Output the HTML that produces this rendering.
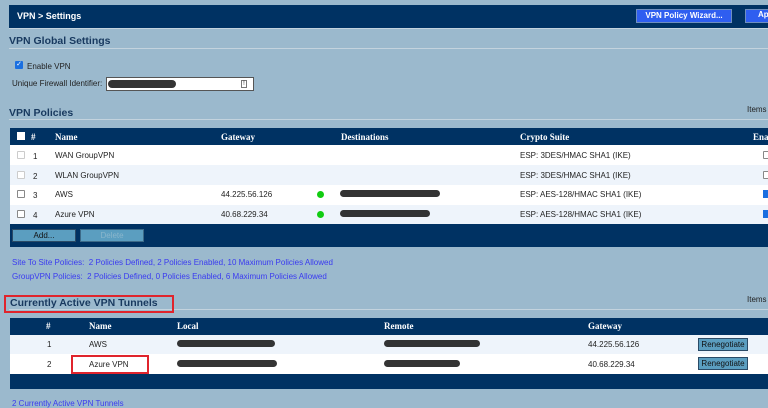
<!DOCTYPE html>
<html><head><meta charset="utf-8"><style>
*{margin:0;padding:0;box-sizing:border-box}
body{width:768px;height:407px;background:#9bb9cd;font-family:"Liberation Sans",sans-serif;font-size:8px;color:#222;position:relative;overflow:hidden}
.a{position:absolute;white-space:nowrap}
.dark{background:#003263}
.h{font-weight:bold;font-size:10.5px;color:#18395f}
.line{position:absolute;height:1px;background:#c3d3de}
.th{color:#fff;font-family:"Liberation Serif",serif;font-weight:bold;font-size:9px}
.cb{position:absolute;width:8px;height:8px;border:1px solid #888;background:#fff;border-radius:1px}
.blob{position:absolute;height:7px;background:#111;border-radius:4px;opacity:.85}
.lnk{color:#3a3af0}
.btn{position:absolute;background:#5b9ec0;border:1px solid #2a4a66;color:#111;font-size:8px;text-align:center}
</style></head><body>
<div class="a dark" style="left:9px;top:5px;width:759px;height:23px"></div>
<div class="a" style="left:17px;top:11px;color:#fff;font-weight:bold;font-size:9px">VPN &gt; Settings</div>
<div class="a" style="left:636px;top:9px;width:96px;height:14px;background:#2f5ef0;border:1px solid #6f8fbf;color:#fff;font-weight:bold;font-size:8px;text-align:center;line-height:12px">VPN Policy Wizard...</div>
<div class="a" style="left:745px;top:9px;width:30px;height:14px;background:#2f5ef0;border:1px solid #6f8fbf"></div>
<div class="a" style="left:758px;top:10px;color:#fff;font-weight:bold;font-size:8px">Ap</div>
<div class="line" style="left:9px;top:28px;width:759px"></div>
<div class="a h" style="left:9px;top:35px">VPN Global Settings</div>
<div class="line" style="left:9px;top:48px;width:759px"></div>
<div class="a" style="left:15px;top:61px;width:8px;height:8px;background:#1a6fe0;border-radius:1px;color:#fff;font-size:7px;line-height:8px;text-align:center">✓</div>
<div class="a" style="left:27px;top:62px">Enable VPN</div>
<div class="a" style="left:12px;top:79px">Unique Firewall Identifier:</div>
<div class="a" style="left:106px;top:77px;width:148px;height:14px;background:#fff;border:1px solid #555"></div>
<div class="blob" style="left:108px;top:80px;width:68px;height:8px"></div>
<div class="a" style="left:241px;top:80px;width:6px;height:8px;border:1px solid #777;font-size:6px;line-height:6px;text-align:center">!</div>
<div class="a h" style="left:9px;top:107px">VPN Policies</div>
<div class="a" style="left:747px;top:105px">Items</div>
<div class="line" style="left:9px;top:119px;width:759px"></div>
<div class="a dark" style="left:10px;top:128px;width:758px;height:17px"></div>
<div class="a" style="left:17px;top:132px;width:8px;height:8px;background:#fff"></div>
<div class="a th" style="left:31px;top:132px">#</div>
<div class="a th" style="left:55px;top:132px">Name</div>
<div class="a th" style="left:221px;top:132px">Gateway</div>
<div class="a th" style="left:341px;top:132px">Destinations</div>
<div class="a th" style="left:520px;top:132px">Crypto Suite</div>
<div class="a th" style="left:753px;top:132px">Ena</div>
<div class="a" style="left:10px;top:145px;width:758px;height:20px;background:#fff"></div>
<div class="a" style="left:10px;top:165px;width:758px;height:20px;background:#eef4fb"></div>
<div class="a" style="left:10px;top:185px;width:758px;height:20px;background:#fff"></div>
<div class="a" style="left:10px;top:205px;width:758px;height:19px;background:#eef4fb"></div>
<div class="cb" style="left:17px;top:151px;border-color:#ccc"></div><div class="a" style="left:33px;top:152px">1</div><div class="a" style="left:55px;top:151px">WAN GroupVPN</div><div class="a" style="left:520px;top:151px">ESP: 3DES/HMAC SHA1 (IKE)</div><div class="cb" style="left:763px;top:151px"></div>
<div class="cb" style="left:17px;top:171px;border-color:#ccc"></div><div class="a" style="left:33px;top:172px">2</div><div class="a" style="left:55px;top:171px">WLAN GroupVPN</div><div class="a" style="left:520px;top:171px">ESP: 3DES/HMAC SHA1 (IKE)</div><div class="cb" style="left:763px;top:171px"></div>
<div class="cb" style="left:17px;top:190px"></div><div class="a" style="left:33px;top:191px">3</div><div class="a" style="left:55px;top:190px">AWS</div><div class="a" style="left:221px;top:190px">44.225.56.126</div><div class="a" style="left:317px;top:191px;width:7px;height:7px;border-radius:50%;background:#1c1"></div><div class="blob" style="left:340px;top:190px;width:100px"></div><div class="a" style="left:520px;top:190px">ESP: AES-128/HMAC SHA1 (IKE)</div><div class="a" style="left:763px;top:190px;width:8px;height:8px;background:#1a6fe0"></div>
<div class="cb" style="left:17px;top:210px"></div><div class="a" style="left:33px;top:211px">4</div><div class="a" style="left:55px;top:210px">Azure VPN</div><div class="a" style="left:221px;top:210px">40.68.229.34</div><div class="a" style="left:317px;top:211px;width:7px;height:7px;border-radius:50%;background:#1c1"></div><div class="blob" style="left:340px;top:210px;width:90px"></div><div class="a" style="left:520px;top:210px">ESP: AES-128/HMAC SHA1 (IKE)</div><div class="a" style="left:763px;top:210px;width:8px;height:8px;background:#1a6fe0"></div>
<div class="a dark" style="left:10px;top:224px;width:758px;height:23px"></div>
<div class="btn" style="left:12px;top:229px;width:64px;height:13px;line-height:11px">Add...</div>
<div class="btn" style="left:80px;top:229px;width:64px;height:13px;line-height:11px;color:#8ab6cc;border-color:#3c6a88">Delete</div>
<div class="a lnk" style="left:12px;top:258px">Site To Site Policies:&nbsp; 2 Policies Defined, 2 Policies Enabled, 10 Maximum Policies Allowed</div>
<div class="a lnk" style="left:12px;top:272px">GroupVPN Policies:&nbsp; 2 Policies Defined, 0 Policies Enabled, 6 Maximum Policies Allowed</div>
<div class="line" style="left:9px;top:309px;width:759px"></div>
<div class="a h" style="left:10px;top:297px">Currently Active VPN Tunnels</div>
<div class="a" style="left:4px;top:295px;width:170px;height:18px;border:2px solid #e0242c"></div>
<div class="a" style="left:747px;top:295px">Items</div>
<div class="a dark" style="left:10px;top:318px;width:758px;height:17px"></div>
<div class="a th" style="left:46px;top:321px">#</div>
<div class="a th" style="left:89px;top:321px">Name</div>
<div class="a th" style="left:177px;top:321px">Local</div>
<div class="a th" style="left:384px;top:321px">Remote</div>
<div class="a th" style="left:588px;top:321px">Gateway</div>
<div class="a" style="left:10px;top:335px;width:758px;height:19px;background:#eef4fb"></div>
<div class="a" style="left:10px;top:354px;width:758px;height:20px;background:#fff"></div>
<div class="a" style="left:47px;top:340px">1</div><div class="a" style="left:89px;top:340px">AWS</div><div class="blob" style="left:177px;top:340px;width:98px"></div><div class="blob" style="left:384px;top:340px;width:96px"></div><div class="a" style="left:588px;top:340px">44.225.56.126</div>
<div class="btn" style="left:698px;top:338px;width:50px;height:13px;line-height:11px">Renegotiate</div>
<div class="a" style="left:47px;top:360px">2</div><div class="a" style="left:89px;top:360px">Azure VPN</div><div class="blob" style="left:177px;top:360px;width:100px"></div><div class="blob" style="left:384px;top:360px;width:76px"></div><div class="a" style="left:588px;top:360px">40.68.229.34</div>
<div class="btn" style="left:698px;top:357px;width:50px;height:13px;line-height:11px">Renegotiate</div>
<div class="a" style="left:71px;top:355px;width:78px;height:19px;border:2px solid #e0242c"></div>
<div class="a dark" style="left:10px;top:374px;width:758px;height:15px"></div>
<div class="a lnk" style="left:12px;top:399px">2 Currently Active VPN Tunnels</div>
</body></html>
